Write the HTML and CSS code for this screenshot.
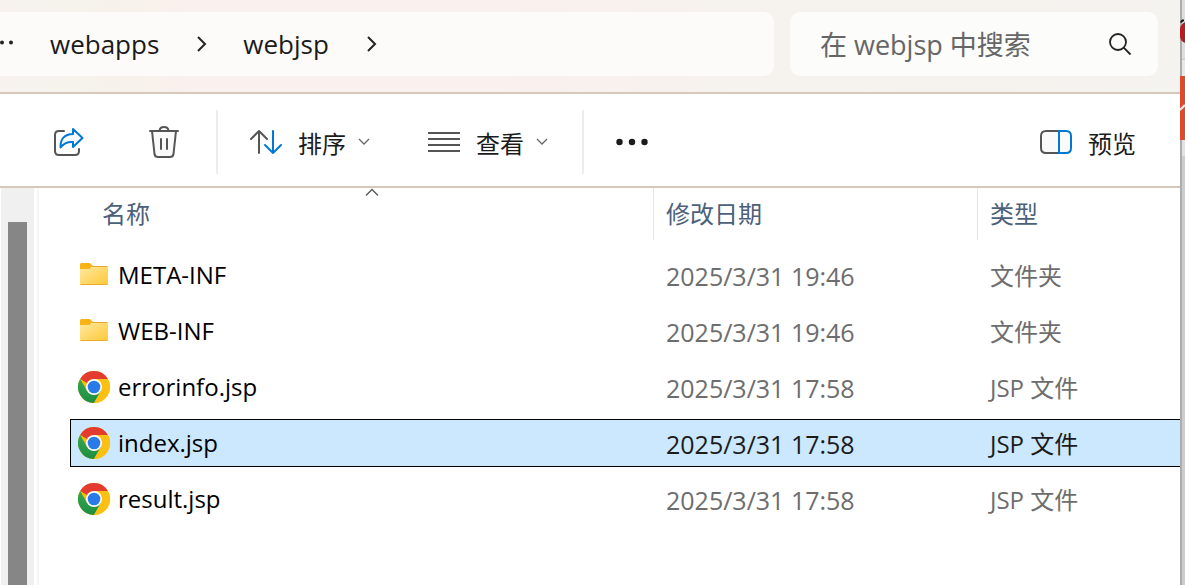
FILE: index.html
```html
<!DOCTYPE html>
<html lang="zh-CN">
<head>
  <meta charset="UTF-8" />
  <meta name="viewport" content="width=device-width, initial-scale=1.0"/>
  <title>webjsp</title>
  <link rel="stylesheet" href="styles.css">
</head>
<body>
  <!-- Shared icons -->
  <svg class="sprite" aria-hidden="true">
    <defs>
      <linearGradient id="folder-fill" x1="0" y1="0" x2="1" y2="1">
        <stop offset="0" stop-color="#ffe9a2"/>
        <stop offset="1" stop-color="#ffc937"/>
      </linearGradient>
      <linearGradient id="chrome-green" x1="0" y1="0" x2="0" y2="1">
        <stop offset="0" stop-color="#34a853"/>
        <stop offset="1" stop-color="#1e8e3e"/>
      </linearGradient>
    </defs>
    <symbol id="folder" viewBox="0 0 32 32">
      <path d="M2 5.5Q2 4 3.500 4H11Q12 4 13 5L15 7V11H2Z" fill="#f8b416"/>
      <path d="M2 10H11.500L14 7H29Q30 7 30 8V25Q30 26 29 26H3Q2 26 2 25Z" fill="url(#folder-fill)"/>
      <path d="M14 7.500H29.500M2.500 25.500H29.500" fill="none" stroke="#e8aa28" stroke-width="1"/>
    </symbol>
    <symbol id="chrome" viewBox="0 0 32 32">
      <circle cx="16" cy="16" r="16" fill="#fbbc04"/>
      <path d="M16 16L2.140 8A16 16 0 0 1 29.860 8Z" fill="#e33b2e"/>
      <path d="M2.140 8A16 16 0 0 0 16 32L22.930 20L16 16L9.070 20Z" fill="url(#chrome-green)"/>
      <path d="M16 8H29.860A16 16 0 0 1 16 32L22.930 20Z" fill="#fcc012"/>
      <circle cx="16" cy="16" r="8" fill="#fff"/>
      <circle cx="16" cy="16" r="6.300" fill="#2a7bea"/>
    </symbol>
    <symbol id="chevron-right" viewBox="0 0 12 18">
      <path d="M2 2L9 9L2 16" fill="none" stroke="#222" stroke-width="2"/>
    </symbol>
    <symbol id="chevron-down" viewBox="0 0 12 8">
      <path d="M1 1L6 6L11 1" fill="none" stroke="#666" stroke-width="1.300"/>
    </symbol>
  </svg>

  <div class="window">
    <header class="address-row">
      <nav class="breadcrumb" aria-label="路径">
        <svg class="more" width="14" height="8" viewBox="0 0 14 8"><circle cx="2" cy="2.500" r="2" fill="#222"/><circle cx="11" cy="2.500" r="2" fill="#222"/></svg>
        <a href="#" class="crumb">webapps</a>
        <svg class="sep" width="12" height="18"><use href="#chevron-right"/></svg>
        <a href="#" class="crumb">webjsp</a>
        <svg class="sep" width="12" height="18"><use href="#chevron-right"/></svg>
      </nav>
      <div class="search">
        <input type="text" placeholder="在 webjsp 中搜索" aria-label="在 webjsp 中搜索" />
        <svg width="24" height="24" viewBox="0 0 24 24" fill="none" stroke="#222" stroke-width="1.800"><circle cx="10" cy="10" r="8"/><path d="M15.700 15.700L22.500 22.500"/></svg>
      </div>
    </header>

    <div class="toolbar">
      <button type="button" class="icon-btn" aria-label="共享">
        <svg width="32" height="32" viewBox="0 0 32 32" fill="none" stroke-width="2" stroke-linejoin="round" stroke-linecap="round">
          <path d="M12 5H7Q3 5 3 9V25Q3 29 7 29H23Q27 29 27 25V23" stroke="#555"/>
          <path d="M21 3L30.500 12L21 21V16Q13 15.500 8.500 21.500Q8 8.500 21 8Z" fill="#f7fbff" stroke="#0078d4"/>
        </svg>
      </button>
      <button type="button" class="icon-btn" aria-label="删除">
        <svg width="32" height="32" viewBox="0 0 32 32" fill="none" stroke="#555" stroke-width="2" stroke-linecap="round" stroke-linejoin="round">
          <path d="M4 5L6.500 28Q7 31 10 31H22Q25 31 25.500 28L28 5" fill="#fafafa"/>
          <path d="M2 5H30M11.500 4.500Q12 1 16 1Q20 1 20.500 4.500M13 13V23M19 13V23"/>
        </svg>
      </button>
      <span class="divider"></span>
      <button type="button" class="tool-btn">
        <svg width="32" height="32" viewBox="0 0 32 32" fill="none" stroke-width="2" stroke-linecap="round" stroke-linejoin="round">
          <path d="M9 27V5M1 13L9 5L17 13" stroke="#555"/>
          <path d="M23 5V27M15 19L23 27L31 19" stroke="#0078d4"/>
        </svg>
        排序
        <svg class="caret" width="12" height="8"><use href="#chevron-down"/></svg>
      </button>
      <button type="button" class="tool-btn view-btn">
        <svg width="32" height="32" viewBox="0 0 32 32" stroke="#555" stroke-width="2"><path d="M0 7H32M0 13H32M0 19H32M0 25H32"/></svg>
        查看
        <svg class="caret" width="12" height="8"><use href="#chevron-down"/></svg>
      </button>
      <span class="divider"></span>
      <button type="button" class="tool-btn" aria-label="更多">
        <svg width="32" height="32" viewBox="0 0 32 32" fill="#1b1b1b"><circle cx="3.500" cy="16" r="3.200"/><circle cx="16" cy="16" r="3.200"/><circle cx="28.500" cy="16" r="3.200"/></svg>
      </button>
      <button type="button" class="tool-btn preview-btn">
        <svg width="32" height="32" viewBox="0 0 32 32" fill="#fafafa" stroke-width="2">
          <path d="M19 5H6Q1 5 1 10V22Q1 27 6 27H19" stroke="#555"/>
          <path d="M19 5H26Q31 5 31 10V22Q31 27 26 27H19Z" stroke="#0078d4"/>
        </svg>
        预览
      </button>
    </div>

    <main class="content">
      <div class="nav-scroll"><div class="thumb"></div></div>
      <div class="files">
        <table>
          <colgroup>
            <col class="col-name">
            <col class="col-date">
            <col>
          </colgroup>
          <thead>
            <tr>
              <th>
                <div class="head head-name">名称
                  <svg class="sort-mark" width="14" height="8" viewBox="0 0 14 8"><path d="M1 7.500L7 1.500L13 7.500" fill="none" stroke="#555" stroke-width="1.300"/></svg>
                </div>
              </th>
              <th><div class="head">修改日期</div></th>
              <th><div class="head">类型</div></th>
            </tr>
          </thead>
          <tbody>
            <tr>
              <td><div class="name"><svg width="32" height="32"><use href="#folder"/></svg>META-INF</div></td>
              <td class="date">2025/3/31 19:46</td>
              <td>文件夹</td>
            </tr>
            <tr>
              <td><div class="name"><svg width="32" height="32"><use href="#folder"/></svg>WEB-INF</div></td>
              <td class="date">2025/3/31 19:46</td>
              <td>文件夹</td>
            </tr>
            <tr>
              <td><div class="name"><svg width="32" height="32"><use href="#chrome"/></svg>errorinfo.jsp</div></td>
              <td class="date">2025/3/31 17:58</td>
              <td>JSP 文件</td>
            </tr>
            <tr class="selected">
              <td><div class="name"><svg width="32" height="32"><use href="#chrome"/></svg>index.jsp</div></td>
              <td class="date">2025/3/31 17:58</td>
              <td>JSP 文件</td>
            </tr>
            <tr>
              <td><div class="name"><svg width="32" height="32"><use href="#chrome"/></svg>result.jsp</div></td>
              <td class="date">2025/3/31 17:58</td>
              <td>JSP 文件</td>
            </tr>
          </tbody>
        </table>
      </div>
    </main>
  </div>

  <!-- Edge of the window behind -->
  <aside class="behind">
    <svg width="5" height="156" viewBox="0 0 5 156">
      <rect width="5" height="59" fill="#dedede"/>
      <rect y="59" width="5" height="1" fill="#c8c8c8"/>
      <rect y="60" width="5" height="16" fill="#e8e8e8"/>
      <rect y="140" width="5" height="16" fill="#e2e2e2"/>
      <rect width="2" height="156" fill="#adadad"/>
      <path d="M0 22L2 19.500H4V21L1 23Z" fill="#111"/>
      <path d="M5 22Q0 25 0 29V36Q0 41 5 43Z" fill="#b71c22"/>
      <rect y="76" width="5" height="64" fill="#dc4c2c"/>
      <path d="M0 110L5 105" stroke="#e8e8e8" stroke-width="2"/>
    </svg>
  </aside>
</body>
</html>
```
FILE: styles.css
```css
* {
  box-sizing: border-box;
}
body {
  margin: 0;
  display: flex;
  min-height: 100vh;
  background: #fff;
  font-family: "Open Sans", "Noto Sans CJK SC", sans-serif;
  font-size: 24px;
  color: #1b1b1b;
  overflow: hidden;
}
svg {
  display: block;
  flex: none;
}
.sprite {
  position: absolute;
  width: 0;
  height: 0;
}
.window {
  flex: 1;
  min-width: 0;
  display: flex;
  flex-direction: column;
  border-right: 2px solid #adadad;
}
.behind {
  width: 3px;
  background: #cbcdcf;
}
.behind svg {
  margin-left: -2px;
}

/* Address bar and search */
.address-row {
  display: flex;
  gap: 16px;
  padding: 12px 22px 16px 0;
  background: linear-gradient(to right, #f7f2ee 0, #f6f2eb 10%, #faf0ed 16%, #faf0ed 42%, #f6f2ed 62%, #f5f3ef 100%);
  border-bottom: 2px solid #d5c7ba;
}
.breadcrumb {
  flex: 1;
  display: flex;
  align-items: center;
  height: 64px;
  background: #fcfbf9;
  border-radius: 0 10px 10px 0;
}
.more {
  margin-right: 36px;
}
.crumb {
  color: #1b1b1b;
  font-size: 26px;
  text-decoration: none;
}
.sep {
  margin: 0 35px 0 37px;
}
.search {
  display: flex;
  align-items: center;
  width: 368px;
  height: 64px;
  padding: 0 26px 0 30px;
  background: #fcfcfa;
  border-radius: 10px;
}
.search input {
  flex: 1;
  min-width: 0;
  padding: 0;
  border: none;
  outline: none;
  background: none;
  font-family: inherit;
  font-size: 27px;
}
.search input::placeholder {
  color: #666;
  opacity: 1;
}

/* Command bar */
.toolbar {
  display: flex;
  align-items: center;
  height: 94px;
  padding: 4px 28px 0 36px;
  border-bottom: 2px solid #d5c7ba;
}
.toolbar button {
  display: flex;
  align-items: center;
  gap: 16px;
  height: 64px;
  padding: 0 16px;
  border: none;
  background: none;
  font-family: inherit;
  font-size: 24px;
  color: #1b1b1b;
}
.toolbar .icon-btn {
  margin-right: 32px;
}
.toolbar .icon-btn + .divider {
  margin-left: -12px;
}
.caret {
  margin-left: -4px;
}
.divider {
  width: 2px;
  height: 64px;
  margin: 0 16px;
  background: #ededed;
}
.toolbar .view-btn {
  margin: 0 2px 0 26px;
}
.toolbar .preview-btn {
  margin-left: auto;
}

/* File list */
.content {
  flex: 1;
  display: flex;
}
.nav-scroll {
  display: flex;
  width: 33px;
  margin-left: 1px;
  padding: 34px 7px 0;
  background: #f0f0f0;
}
.thumb {
  flex: 1;
  background: #868686;
}
.files {
  flex: 1;
  margin-left: 3px;
  padding-left: 31px;
  border-left: 2px solid #f6f6f6;
}
table {
  width: 100%;
  table-layout: fixed;
  border-spacing: 0;
}
.col-name {
  width: 583px;
}
.col-date {
  width: 324px;
}
th {
  height: 59px;
  padding: 0;
  vertical-align: top;
  font-weight: normal;
  text-align: left;
  color: #4c607a;
}
.head {
  height: 52px;
  padding-left: 12px;
  border-left: 1px solid #e5e5e5;
  line-height: 52px;
}
.head-name {
  position: relative;
  margin-left: 19px;
  border-color: transparent;
}
.sort-mark {
  position: absolute;
  top: 0;
  left: calc(50% - 7px);
}
td {
  height: 56px;
  padding: 2px 0 0 13px;
  border: solid transparent;
  border-width: 4px 0;
  background-clip: padding-box;
  line-height: 32px;
  color: #6d6d6d;
}
td:first-child {
  padding: 0 0 0 8px;
  color: #000;
}
.date {
  font-size: 25px;
}
.name {
  display: flex;
  align-items: center;
  gap: 8px;
}
.selected td {
  background-color: #cce8ff;
  box-shadow: inset 0 1px #000, inset 0 -1px #000;
  color: #1b1b1b;
}
.selected td:first-child {
  box-shadow: inset 0 1px #000, inset 0 -1px #000, inset 1px 0 #000;
  color: #000;
}
```
